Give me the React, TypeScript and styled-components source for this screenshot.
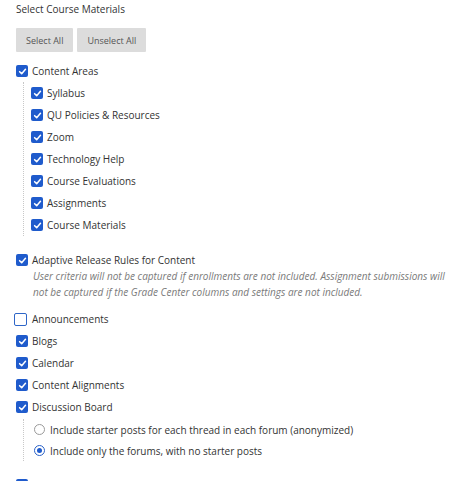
import React from "react";
import styled, { createGlobalStyle } from "styled-components";

const Global = createGlobalStyle`
  html, body { margin: 0; padding: 0; background: #fff; }
  body { font-family: "Open Sans", "Liberation Sans", sans-serif; font-size: 10px; color: #333; overflow: hidden; }
`;

const Page = styled.div`
  width: 474px;
  height: 481px;
  overflow: hidden;
  padding-left: 16px;
  box-sizing: border-box;
`;

const Title = styled.div`
  height: 18px;
  line-height: 18px;
  font-size: 10px;
  color: #333;
`;

const ButtonBar = styled.div`
  display: flex;
  gap: 4px;
  margin-top: 10px;
  margin-bottom: 8px;
`;

const Button = styled.button`
  height: 24px;
  padding: 0 10px;
  border: none;
  background: #dcdcdc;
  color: #555;
  font-family: inherit;
  font-size: 9px;
  border-radius: 1px;
`;

const Row = styled.label<{ $h?: number }>`
  display: flex;
  align-items: center;
  gap: 4px;
  height: ${(p) => p.$h ?? 22}px;
  white-space: nowrap;
`;

const Box = styled.span<{ $checked: boolean }>`
  flex: none;
  box-sizing: border-box;
  display: inline-flex;
  align-items: center;
  justify-content: center;
  width: ${(p) => (p.$checked ? 12 : 13)}px;
  height: ${(p) => (p.$checked ? 12 : 13)}px;
  margin-left: ${(p) => (p.$checked ? 0 : -2)}px;
  margin-right: ${(p) => (p.$checked ? 0 : 1)}px;
  border-radius: 2px;
  background: ${(p) => (p.$checked ? "#1f5bcc" : "#fff")};
  border: ${(p) => (p.$checked ? "none" : "1.5px solid #2e66c8")};
`;

const Children = styled.div<{ $mb?: number; $mt?: number }>`
  margin-left: 7px;
  border-left: 1px dotted #c8c8c8;
  padding-left: 7px;
  margin-top: ${(p) => p.$mt ?? 0}px;
  margin-bottom: ${(p) => p.$mb ?? 0}px;
`;

const Description = styled.div`
  padding-left: 17px;
  margin-top: -3px;
  margin-bottom: 8px;
  line-height: 16px;
  font-style: italic;
  color: #7a7a7a;
  width: 422px;
`;

const RadioRow = styled.label`
  display: flex;
  align-items: center;
  gap: 5px;
  height: 21px;
  padding-left: 3px;
  white-space: nowrap;
`;

const RadioDot = styled.span<{ $checked: boolean }>`
  flex: none;
  box-sizing: border-box;
  width: 11px;
  height: 11px;
  border-radius: 50%;
  border: 1px solid ${(p) => (p.$checked ? "#2a62c8" : "#9a9a9a")};
  background: #fff;
  display: inline-flex;
  align-items: center;
  justify-content: center;
  &::after {
    content: "";
    display: ${(p) => (p.$checked ? "block" : "none")};
    width: 5px;
    height: 5px;
    border-radius: 50%;
    background: #1f5bcc;
  }
`;

const Check = () => (
  <svg width="9" height="9" viewBox="0 0 10 10">
    <path d="M1.8 5.2 L4.1 7.4 L8.3 2.6" fill="none" stroke="#fff" strokeWidth="1.7" strokeLinecap="round" strokeLinejoin="round" />
  </svg>
);

const Item = ({ label, checked = true }: { label: string; checked?: boolean }) => (
  <Row>
    <Box $checked={checked}>{checked && <Check />}</Box>
    <span>{label}</span>
  </Row>
);

const Radio = ({ label, checked }: { label: string; checked: boolean }) => (
  <RadioRow>
    <RadioDot $checked={checked} />
    <span>{label}</span>
  </RadioRow>
);

const contentAreas = [
  "Syllabus",
  "QU Policies & Resources",
  "Zoom",
  "Technology Help",
  "Course Evaluations",
  "Assignments",
  "Course Materials",
];

export default function App() {
  return (
    <Page>
      <Global />
      <Title>Select Course Materials</Title>
      <ButtonBar>
        <Button>Select All</Button>
        <Button>Unselect All</Button>
      </ButtonBar>
      <Item label="Content Areas" />
      <Children $mb={13}>
        {contentAreas.map((c) => (
          <Item key={c} label={c} />
        ))}
      </Children>
      <Item label="Adaptive Release Rules for Content" />
      <Description>
        User criteria will not be captured if enrollments are not included. Assignment submissions will not be
        captured if the Grade Center columns and settings are not included.
      </Description>
      <Item label="Announcements" checked={false} />
      <Item label="Blogs" />
      <Item label="Calendar" />
      <Item label="Content Alignments" />
      <Item label="Discussion Board" />
      <Children $mt={1} $mb={13}>
        <Radio label="Include starter posts for each thread in each forum (anonymized)" checked={false} />
        <Radio label="Include only the forums, with no starter posts" checked />
      </Children>
      <Item label="Glossary" />
    </Page>
  );
}
